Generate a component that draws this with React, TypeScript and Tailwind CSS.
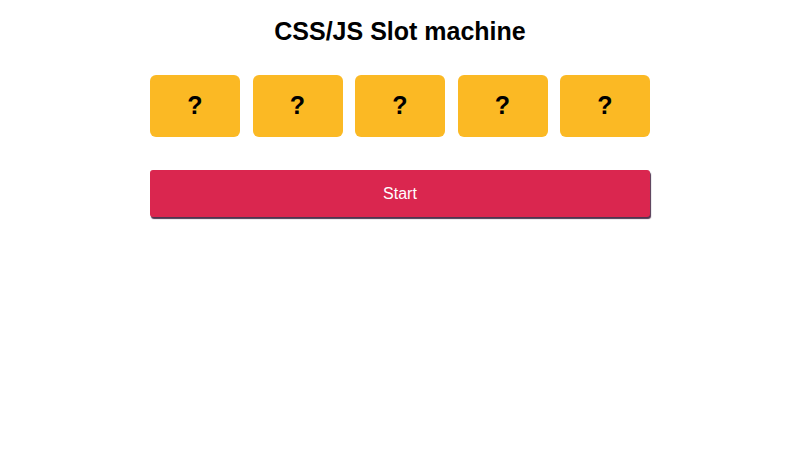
import React from "react";

export default function App() {
  return (
    <div className="w-[800px] h-[450px] bg-white flex flex-col items-center" style={{ fontFamily: '"Liberation Sans", Arial, sans-serif' }}>
      <h1 className="mt-[15px] text-[25px] leading-[32px] font-bold text-black">CSS/JS Slot machine</h1>
      <div className="mt-[28px] w-[500px] flex gap-[12.5px]">
        {[0, 1, 2, 3, 4].map((i) => (
          <div key={i} className="w-[90px] h-[62px] rounded-[6px] bg-[#fbb924] flex items-center justify-center text-[25px] font-bold text-black">
            ?
          </div>
        ))}
      </div>
      <button className="mt-[33px] w-[500px] h-[47px] rounded-[3px] bg-[#da264f] text-white text-[16px] shadow-[1px_2px_1px_rgba(60,30,60,0.9)]">
        Start
      </button>
    </div>
  );
}
